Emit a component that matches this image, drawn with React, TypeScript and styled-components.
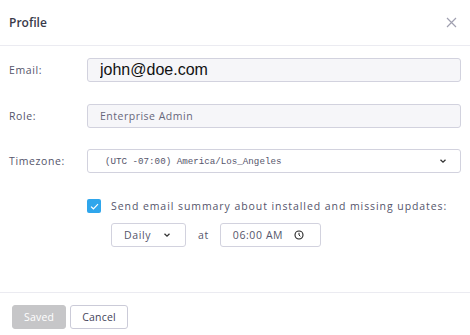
import React, { useState } from 'react';
import styled, { createGlobalStyle } from 'styled-components';

const GlobalStyle = createGlobalStyle`
  html, body {
    margin: 0;
    padding: 0;
    background: white;
  }
  body {
    font-family: 'Open Sans', 'Noto Sans', sans-serif;
  }
`;

const Modal = styled.div`
  width: 470px;
  height: 335px;
  display: flex;
  flex-direction: column;
  background: white;
  box-sizing: border-box;
`;

const Header = styled.div`
  height: 46px;
  display: flex;
  align-items: center;
  justify-content: space-between;
  padding: 0 13px 0 9px;
  border-bottom: 1px solid #ebebf1;
  box-sizing: border-box;
`;

const Title = styled.div`
  font-size: 12px;
  font-weight: 600;
  color: #3a3a4a;
`;

const CloseButton = styled.button`
  background: none;
  border: none;
  padding: 0;
  width: 12px;
  height: 12px;
  display: flex;
  align-items: center;
  justify-content: center;
  cursor: pointer;
`;

const Body = styled.div`
  flex: 1;
  padding: 12px 9px 0 9px;
  display: flex;
  flex-direction: column;
`;

const FieldRow = styled.div<{ $gap?: number }>`
  display: grid;
  grid-template-columns: 78px 1fr;
  align-items: center;
  height: 24px;
  margin-bottom: ${p => p.$gap ?? 22}px;
`;

const Label = styled.label`
  font-size: 10.5px;
  letter-spacing: 0.6px;
  color: #55556b;
`;

const TextInput = styled.input<{ $big?: boolean }>`
  height: 24px;
  box-sizing: border-box;
  background: #f6f6f9;
  border: 1px solid #d2d2de;
  border-radius: 3px;
  padding: 0 12px;
  font-family: ${p => (p.$big ? "'Liberation Sans', Arial, sans-serif" : "'Open Sans', sans-serif")};
  font-size: ${p => (p.$big ? '16px' : '10.5px')};
  letter-spacing: ${p => (p.$big ? '0' : '0.5px')};
  color: ${p => (p.$big ? '#111' : '#66667a')};
  outline: none;
`;

const SelectBox = styled.div`
  height: 24px;
  box-sizing: border-box;
  border: 1px solid #d2d2de;
  border-radius: 3px;
  padding: 0 13px 0 17px;
  display: flex;
  align-items: center;
  justify-content: space-between;
  background: white;
`;

const MonoText = styled.span`
  font-family: 'Liberation Mono', 'DejaVu Sans Mono', monospace;
  font-size: 9.2px;
  color: #55556b;
`;

const Indented = styled.div`
  padding-left: 78px;
  padding-top: 1px;
  display: flex;
  flex-direction: column;
  gap: 10px;
`;

const CheckRow = styled.div`
  display: flex;
  align-items: center;
  gap: 10px;
`;

const CheckBox = styled.div<{ $checked?: boolean }>`
  width: 14px;
  height: 14px;
  border-radius: 2px;
  background: ${p => (p.$checked ? '#2fa6ec' : 'white')};
  border: ${p => (p.$checked ? 'none' : '1px solid #c9c9d6')};
  display: flex;
  align-items: center;
  justify-content: center;
  cursor: pointer;
`;

const CheckText = styled.span`
  font-size: 10.5px;
  letter-spacing: 0.93px;
  color: #55556b;
`;

const OptionsRow = styled.div`
  display: flex;
  align-items: center;
  padding-left: 24px;
  font-size: 10.5px;
  letter-spacing: 0.6px;
  color: #55556b;
`;

const SmallSelect = styled.div`
  width: 75px;
  height: 24px;
  box-sizing: border-box;
  border: 1px solid #d2d2de;
  border-radius: 3px;
  display: flex;
  align-items: center;
  justify-content: space-between;
  padding: 0 14px 0 12px;
`;

const AtText = styled.span`
  margin: 0 11px 0 12px;
`;

const TimeBox = styled.div`
  width: 101px;
  height: 24px;
  box-sizing: border-box;
  border: 1px solid #d2d2de;
  border-radius: 3px;
  display: flex;
  align-items: center;
  justify-content: space-between;
  padding: 0 16px 0 12px;
`;

const Footer = styled.div`
  height: 43px;
  border-top: 1px solid #ebebf1;
  display: flex;
  align-items: flex-start;
  gap: 4px;
  padding: 12px 0 0 12px;
  box-sizing: border-box;
`;

const Button = styled.button<{ $primary?: boolean }>`
  height: 24px;
  padding: 0 11px;
  border-radius: 3px;
  font-family: 'Open Sans', sans-serif;
  font-size: 10.5px;
  letter-spacing: 0.2px;
  background: ${p => (p.$primary ? '#c6c6c8' : 'white')};
  color: ${p => (p.$primary ? 'white' : '#44445a')};
  border: 1px solid ${p => (p.$primary ? '#c6c6c8' : '#cbcbd8')};
  cursor: ${p => (p.$primary ? 'default' : 'pointer')};
`;

const Chevron = () => (
  <svg width="8" height="6" viewBox="0 0 8 6">
    <path d="M1.5 1.8 L4 4.2 L6.5 1.8" fill="none" stroke="#333" strokeWidth="1.3" />
  </svg>
);

const ClockIcon = () => (
  <svg width="10" height="10" viewBox="0 0 10 10">
    <circle cx="5" cy="5" r="4" fill="none" stroke="#222" strokeWidth="1.1" />
    <path d="M5 2.8 V5 L6.4 6.3" fill="none" stroke="#222" strokeWidth="1" />
  </svg>
);

export default function App() {
  const [checked, setChecked] = useState(true);

  return (
    <>
      <GlobalStyle />
      <Modal>
        <Header>
          <Title>Profile</Title>
          <CloseButton aria-label="Close">
            <svg width="11" height="11" viewBox="0 0 11 11">
              <path d="M1 1 L10 10 M10 1 L1 10" stroke="#a0a0b0" strokeWidth="1.2" />
            </svg>
          </CloseButton>
        </Header>
        <Body>
          <FieldRow>
            <Label>Email:</Label>
            <TextInput $big defaultValue="john@doe.com" />
          </FieldRow>
          <FieldRow $gap={21}>
            <Label>Role:</Label>
            <TextInput defaultValue="Enterprise Admin" readOnly />
          </FieldRow>
          <FieldRow $gap={25}>
            <Label>Timezone:</Label>
            <SelectBox>
              <MonoText>(UTC -07:00) America/Los_Angeles</MonoText>
              <Chevron />
            </SelectBox>
          </FieldRow>
          <Indented>
            <CheckRow>
              <CheckBox $checked={checked} onClick={() => setChecked(!checked)}>
                {checked && (
                  <svg width="9" height="7" viewBox="0 0 9 7">
                    <path d="M1 3.6 L3.4 5.8 L8 1.2" fill="none" stroke="white" strokeWidth="1.2" />
                  </svg>
                )}
              </CheckBox>
              <CheckText>Send email summary about installed and missing updates:</CheckText>
            </CheckRow>
            <OptionsRow>
              <SmallSelect>
                <span>Daily</span>
                <Chevron />
              </SmallSelect>
              <AtText>at</AtText>
              <TimeBox>
                <span>06:00 AM</span>
                <ClockIcon />
              </TimeBox>
            </OptionsRow>
          </Indented>
        </Body>
        <Footer>
          <Button $primary>Saved</Button>
          <Button>Cancel</Button>
        </Footer>
      </Modal>
    </>
  );
}
